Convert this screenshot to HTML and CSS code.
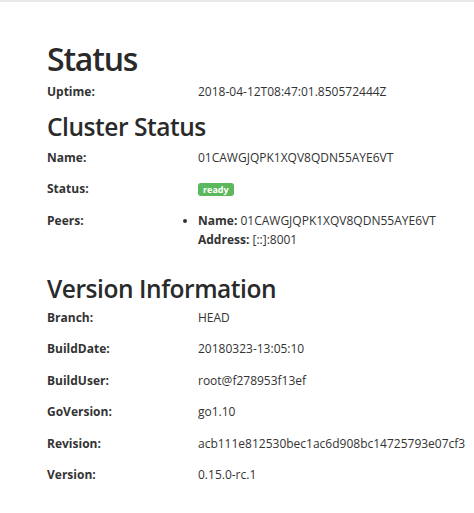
FILE: index.html
```html
<!DOCTYPE html>
<html lang="en">
<head>
    <meta charset="UTF-8">
    <title>Status</title>
    <link rel="stylesheet" href="styles.css">
</head>
<body>
    <div class="topbar"></div>
    <div id="main">
        <h1>Status</h1>
        <div class="row">
            <div class="key">Uptime:</div>
            <div class="val">2018-04-12T08:47:01.850572444Z</div>
        </div>

        <h2>Cluster Status</h2>
        <div class="row">
            <div class="key">Name:</div>
            <div class="val">01CAWGJQPK1XQV8QDN55AYE6VT</div>
        </div>
        <div class="row">
            <div class="key">Status:</div>
            <div class="val"><span class="badge">ready</span></div>
        </div>
        <div class="row peers">
            <div class="key">Peers:</div>
            <ul class="val">
                <li>
                    <div><b>Name:</b> 01CAWGJQPK1XQV8QDN55AYE6VT</div>
                    <div><b>Address:</b> [::]:8001</div>
                </li>
            </ul>
        </div>

        <h2 class="version">Version Information</h2>
        <div class="info">
            <div class="row">
                <div class="key">Branch:</div>
                <div class="val">HEAD</div>
            </div>
            <div class="row">
                <div class="key">BuildDate:</div>
                <div class="val">20180323-13:05:10</div>
            </div>
            <div class="row">
                <div class="key">BuildUser:</div>
                <div class="val">root@f278953f13ef</div>
            </div>
            <div class="row">
                <div class="key">GoVersion:</div>
                <div class="val">go1.10</div>
            </div>
            <div class="row">
                <div class="key">Revision:</div>
                <div class="val">acb111e812530bec1ac6d908bc14725793e07cf3</div>
            </div>
            <div class="row">
                <div class="key">Version:</div>
                <div class="val">0.15.0-rc.1</div>
            </div>
        </div>
    </div>
</body>
</html>
```

FILE: styles.css
```css
* {
    margin: 0;
    padding: 0;
    box-sizing: border-box;
}
body {
    font-family: "Open Sans", "Noto Sans", sans-serif;
    font-size: 12px;
    color: #333;
    background: #fff;
}
.topbar {
    height: 2px;
    background-color: #e8e8e8;
}
#main {
    padding-left: 47px;
}
h1 {
    font-size: 32px;
    font-weight: 600;
    line-height: 1.1;
    letter-spacing: -1.2px;
    color: #2a2a2a;
    margin-top: 39px;
    margin-bottom: 6px;
}
h2 {
    font-size: 24.5px;
    font-weight: 600;
    line-height: 1.1;
    letter-spacing: -0.45px;
    color: #2a2a2a;
    margin-top: 1px;
    margin-bottom: 7px;
}
h2.version {
    margin-top: 27px;
    margin-bottom: 5.5px;
}
.row {
    display: grid;
    grid-template-columns: 151px 1fr;
    line-height: 19px;
    margin-bottom: 12.5px;
}
.info .row {
    margin-bottom: 12.4px;
}
.key {
    font-weight: bold;
}
.peers ul {
    list-style: disc;
}
.badge {
    display: inline-block;
    background-color: #5cb85c;
    color: #fff;
    font-size: 9px;
    font-weight: bold;
    line-height: 1;
    padding: 2px 5px 2px;
    border-radius: 3px;
    vertical-align: 0;
}
```
